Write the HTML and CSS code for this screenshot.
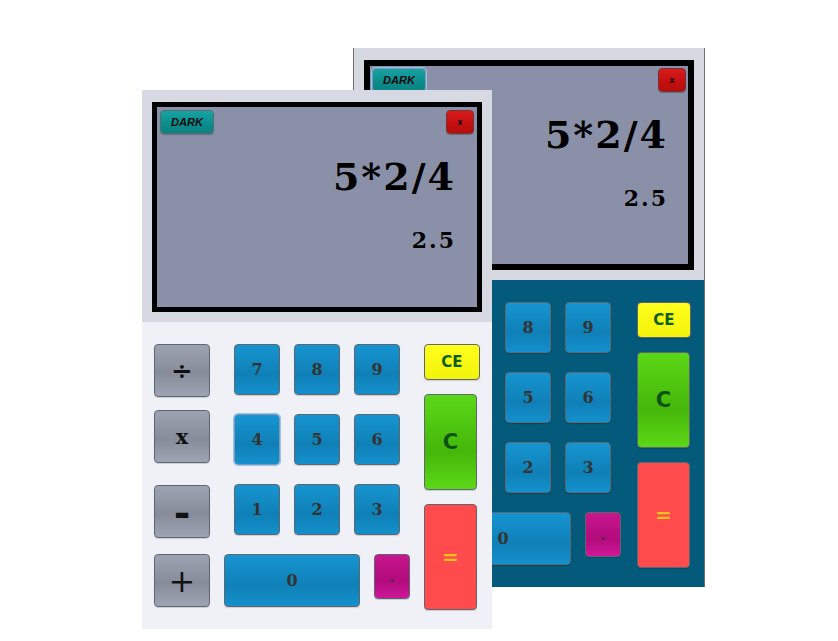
FILE: index.html
```html
<!DOCTYPE html>
<html>
<head>
<meta charset="utf-8">
<link rel="stylesheet" href="styles.css">
</head>
<body>
<div class="calc calc-dark">
  <div class="screen-wrap">
    <div class="screen">
      <div class="screen-top">
        <button class="btn-theme focus-ring">DARK</button>
        <button class="btn-close">x</button>
      </div>
      <div class="expr">5*2/4</div>
      <div class="result">2.5</div>
    </div>
  </div>
  <div class="keypad">
    <div class="ops">
      <button class="key op op-div">÷</button>
      <button class="key op op-mul">x</button>
      <button class="key op op-sub">-</button>
      <button class="key op op-add">+</button>
    </div>
    <div class="nums">
      <div class="num-row"><button class="key num">7</button><button class="key num">8</button><button class="key num">9</button></div>
      <div class="num-row"><button class="key num">4</button><button class="key num">5</button><button class="key num">6</button></div>
      <div class="num-row"><button class="key num">1</button><button class="key num">2</button><button class="key num">3</button></div>
      <div class="num-row last"><button class="key num zero">0</button><button class="key dot">.</button></div>
    </div>
    <div class="side">
      <button class="key ce">CE</button>
      <button class="key clear">C</button>
      <button class="key equals">=</button>
    </div>
  </div>
</div>

<div class="calc calc-light">
  <div class="screen-wrap">
    <div class="screen">
      <div class="screen-top">
        <button class="btn-theme">DARK</button>
        <button class="btn-close">x</button>
      </div>
      <div class="expr">5*2/4</div>
      <div class="result">2.5</div>
    </div>
  </div>
  <div class="keypad">
    <div class="ops">
      <button class="key op op-div">÷</button>
      <button class="key op op-mul">x</button>
      <button class="key op op-sub">-</button>
      <button class="key op op-add">+</button>
    </div>
    <div class="nums">
      <div class="num-row"><button class="key num">7</button><button class="key num">8</button><button class="key num">9</button></div>
      <div class="num-row"><button class="key num focus-ring">4</button><button class="key num">5</button><button class="key num">6</button></div>
      <div class="num-row"><button class="key num">1</button><button class="key num">2</button><button class="key num">3</button></div>
      <div class="num-row last"><button class="key num zero">0</button><button class="key dot">.</button></div>
    </div>
    <div class="side">
      <button class="key ce">CE</button>
      <button class="key clear">C</button>
      <button class="key equals">=</button>
    </div>
  </div>
</div>
</body>
</html>
```

FILE: styles.css
```css
html, body {
  margin: 0;
  padding: 0;
  background: #ffffff;
  width: 838px;
  height: 641px;
  overflow: hidden;
  font-family: "DejaVu Serif", serif;
}

button {
  margin: 0;
  padding: 0;
  font: inherit;
  cursor: pointer;
  outline: none;
}

.calc {
  position: absolute;
  width: 350px;
  border-left: 1px solid transparent;
  border-right: 1px solid transparent;
}

.calc-dark {
  left: 353px;
  top: 48px;
  border-color: #6e6e6e;
}

.calc-light {
  left: 141px;
  top: 90px;
}

.screen-wrap {
  height: 232px;
  box-sizing: border-box;
  padding: 12px 10px 0 10px;
  background: #d6d9e1;
}

.calc-light .screen-wrap {
  padding-left: 10px;
}

.screen {
  width: 330px;
  height: 210px;
  box-sizing: border-box;
  border: 5px solid #000;
  background: #8b90a9;
  padding: 3px;
  display: flex;
  flex-direction: column;
}

.calc-dark .screen {
  border-width: 6px;
  padding: 2px;
}

.screen-top {
  display: flex;
  justify-content: space-between;
  height: 24px;
}

.btn-theme {
  width: 54px;
  height: 24px;
  box-sizing: border-box;
  border: 1px solid #4f7070;
  border-radius: 4px;
  background: linear-gradient(#17a3a3, #0b8c8c 60%, #0a8282);
  font-family: "Liberation Sans", Arial, sans-serif;
  font-weight: bold;
  font-style: italic;
  font-size: 11px;
  color: #0a0a0a;
  box-shadow: 0 1px 1px rgba(0, 0, 0, 0.25);
}

.btn-close {
  width: 28px;
  height: 24px;
  box-sizing: border-box;
  border: 1px solid #7a3030;
  border-radius: 4px;
  background: linear-gradient(#d81c1c, #c40f0f 60%, #b70d0d);
  font-family: "Liberation Sans", Arial, sans-serif;
  font-weight: bold;
  font-size: 9px;
  color: #000;
  box-shadow: 0 1px 1px rgba(0, 0, 0, 0.25);
}

.expr {
  margin-top: 23px;
  padding-right: 18px;
  text-align: right;
  font-weight: bold;
  font-size: 38px;
  letter-spacing: 2px;
  line-height: 40px;
  color: #000;
}

.result {
  margin-top: 30px;
  padding-right: 18px;
  text-align: right;
  font-weight: bold;
  font-size: 22px;
  letter-spacing: 2px;
  line-height: 26px;
  color: #000;
}

.keypad {
  height: 307px;
  box-sizing: border-box;
  padding: 22px 0 0 11px;
  display: flex;
  align-items: flex-start;
  background: #eff1f6;
}

.calc-light .keypad {
  padding-left: 12px;
}

.calc-dark .keypad {
  background: #035a7a;
}

.key {
  box-sizing: border-box;
  border: 1px solid #5f6670;
  border-radius: 4px;
  font-family: "DejaVu Serif", serif;
  font-weight: bold;
  color: #333;
  display: flex;
  align-items: center;
  justify-content: center;
  box-shadow: 0 1px 1px rgba(0, 0, 0, 0.15);
}

.ops {
  display: flex;
  flex-direction: column;
  width: 56px;
}

.op {
  width: 56px;
  height: 53px;
  background: linear-gradient(#9da3b2, #878c9a 55%, #9ea4b4);
  color: #111;
}

.op-div { font-size: 26px; }
.op-mul { margin-top: 13px; font-size: 21px; }
.op-sub { margin-top: 22px; font-size: 40px; line-height: 1; }
.op-add { margin-top: 16px; font-size: 32px; font-weight: normal; }

.nums {
  margin-left: 14px;
  width: 186px;
  display: flex;
  flex-direction: column;
  gap: 19px;
}

.num-row {
  display: flex;
  gap: 14px;
  padding-left: 10px;
}

.num-row.last {
  padding-left: 0;
}

.num {
  width: 46px;
  height: 51px;
  font-size: 16px;
  background: linear-gradient(#1695d1, #0f80b7 60%, #1490cc);
}

.zero {
  width: 136px;
  height: 53px;
}

.dot {
  width: 36px;
  height: 45px;
  font-size: 14px;
  background: linear-gradient(#c9168f, #b10b7c 60%, #d0179a);
  color: #333;
}

.side {
  margin-left: 14px;
  display: flex;
  flex-direction: column;
}

.calc-dark .side {
  margin-left: 16px;
}

.ce {
  width: 56px;
  height: 36px;
  font-family: "DejaVu Sans", sans-serif;
  font-size: 15px;
  color: #0d5e0d;
  background: linear-gradient(#ffff1c, #f2f20a);
}

.calc-dark .ce {
  width: 54px;
}

.clear {
  margin-top: 14px;
  width: 53px;
  height: 96px;
  font-family: "DejaVu Sans", sans-serif;
  font-size: 21px;
  color: #0c530c;
  background: linear-gradient(#5bd816, #45b70a 60%, #5bd816);
}

.equals {
  margin-top: 14px;
  width: 53px;
  height: 106px;
  font-size: 20px;
  color: #f1c21a;
  background: #ff4b4b;
}

.focus-ring {
  border-color: #7a9ac0;
  box-shadow: 0 0 0 1px #9cc0e8;
}
```
